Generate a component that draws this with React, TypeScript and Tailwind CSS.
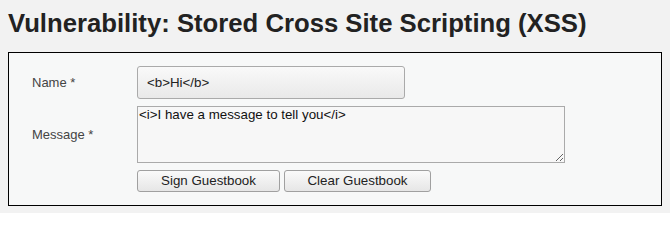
export default function App() {
  return (
    <div className="min-h-[213px] w-[670px] bg-[#f2f2f2] pl-2 pr-[8px] pt-[7px] font-['Liberation_Sans',Arial,sans-serif]">
      <h1 className="text-[25.7px] font-bold leading-[32px] text-[#222]">
        Vulnerability: Stored Cross Site Scripting (XSS)
      </h1>
      <div className="mt-[13px] w-[654px] border border-black bg-[#f7f8f8] pb-[13px] pt-[13px]">
        <div className="flex flex-col gap-[7px]">
          <div className="flex items-center">
            <label className="w-[128px] pl-[23px] text-[13px] text-[#444]">Name *</label>
            <input
              defaultValue="<b>Hi</b>"
              className="h-[33px] w-[268px] rounded-[3px] border border-[#aaa] bg-gradient-to-b from-[#f9f9f9] to-[#e9e9e9] px-[9px] text-[13.33px] text-[#222] outline-none"
            />
          </div>
          <div className="flex items-center">
            <label className="w-[128px] pl-[23px] text-[13px] text-[#444]">Message *</label>
            <textarea
              defaultValue="<i>I have a message to tell you</i>"
              className="h-[57px] w-[428px] border border-[#aaa] bg-[#f7f7f7] px-[1px] py-0 text-[13.33px] leading-[15px] text-[#111] outline-none"
            />
          </div>
          <div className="flex gap-[4px] pl-[128px]">
            <button className="h-[22px] w-[143px] rounded-[3px] border border-[#a0a0a0] bg-gradient-to-b from-[#fafafa] to-[#e6e6e6] text-[13.33px] text-[#222]">
              Sign Guestbook
            </button>
            <button className="h-[22px] w-[147px] rounded-[3px] border border-[#a0a0a0] bg-gradient-to-b from-[#fafafa] to-[#e6e6e6] text-[13.33px] text-[#222]">
              Clear Guestbook
            </button>
          </div>
        </div>
      </div>
    </div>
  );
}
